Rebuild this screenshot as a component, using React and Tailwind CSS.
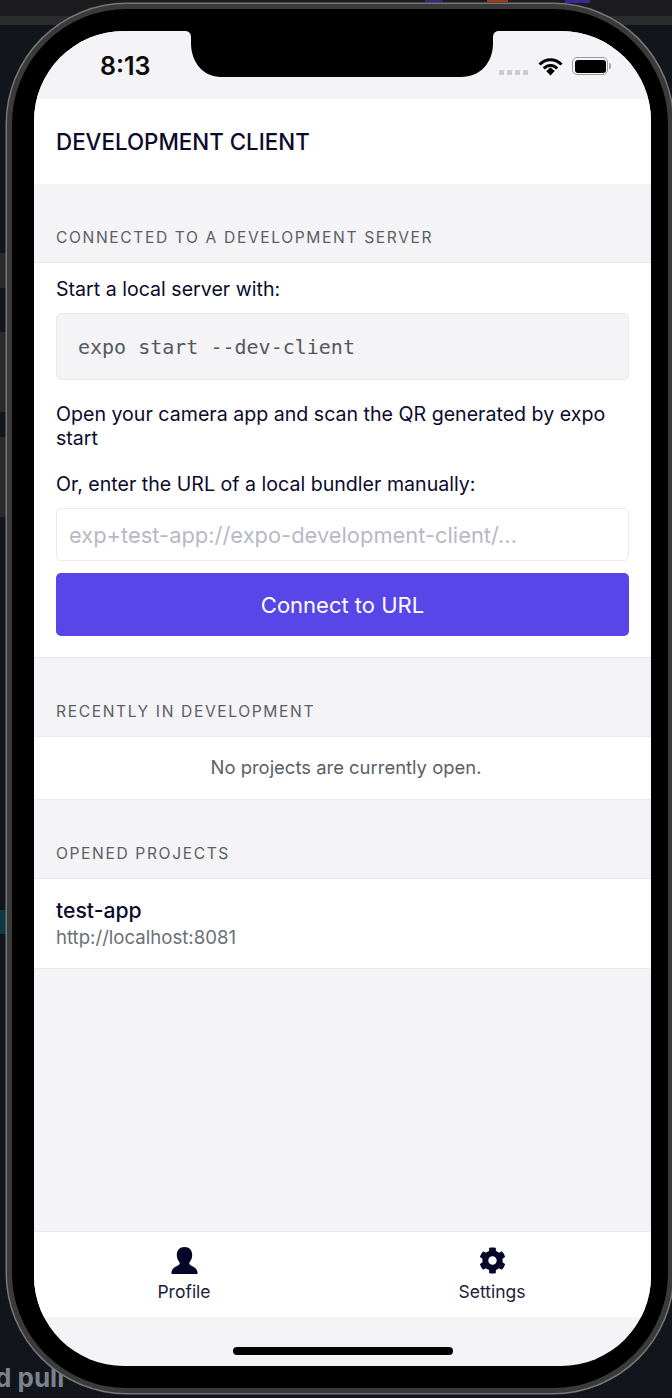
import { FaCog } from 'react-icons/fa';

// slices of the desktop that show to the left of the simulator: [top, height, colour]
const leftBands = [
  [253, 35, 'bg-[#2a2a2b]'],
  [332, 80, 'bg-[#2a2a2b]'],
  [437, 80, 'bg-[#2a2a2b]'],
  [910, 24, 'bg-[#0c3a42]'],
];

function SectionLabel({ children, className }) {
  return (
    <div className={`flex items-end px-[22px] pb-[15px] text-[15.6px] leading-[18px] tracking-[1.62px] text-[#5a5f66] ${className}`}>
      {children}
    </div>
  );
}

function StatusBar() {
  return (
    <div className="relative flex h-[68px] shrink-0 bg-[#f4f4f6]">
      <span className="ml-[66px] mt-[18px] text-[25px] font-semibold leading-[34px] text-[#0a0a0c]">8:13</span>
      <div className="ml-auto mr-[40px] mt-[26px] flex h-[20px] items-start">
        <div className="mt-[13px] flex gap-[3px]">
          <span className="h-[5px] w-[5px] rounded-[1px] bg-[#cdcdd0]" />
          <span className="h-[5px] w-[5px] rounded-[1px] bg-[#cdcdd0]" />
          <span className="h-[5px] w-[5px] rounded-[1px] bg-[#cdcdd0]" />
          <span className="h-[5px] w-[5px] rounded-[1px] bg-[#cdcdd0]" />
        </div>
        <svg className="ml-[10px]" width="25" height="19" viewBox="0 0 25 19">
          <path d="M1.5 7.5C8 1 17 1 23.5 7.5" fill="none" stroke="#000" strokeWidth="3" />
          <path d="M5.8 11.5C9.8 7.6 15.2 7.6 19.2 11.5" fill="none" stroke="#000" strokeWidth="3" />
          <path d="M8.2 14L12.5 10.6L16.8 14L12.5 18.6Z" fill="#000" />
        </svg>
        <div className="ml-[9px] flex items-center">
          <div className="h-[18px] w-[36px] rounded-[5px] border border-[#9a9a9c] p-[1.5px]">
            <div className="h-full w-full rounded-[3px] bg-black" />
          </div>
          <span className="ml-px h-[6px] w-[2px] rounded-r-[2px] bg-[#a5a5a7]" />
        </div>
      </div>
    </div>
  );
}

function TabBar() {
  return (
    <div className="flex h-[86px] shrink-0 border-t border-[#e9eaec] bg-white text-[17.5px] leading-[22px] text-[#1c1c3a]">
      <div className="flex w-[300px] flex-col items-center pt-[15px]">
        <svg width="27" height="27" viewBox="0 0 27 27" className="text-[#05052a]">
          <path
            fill="currentColor"
            d="M13.5 0C8.5 0 5.8 3.5 5.8 8C5.8 11 6.8 13.3 8.3 15C8.9 15.8 8.8 17 8 17.8C6.5 19.2 2.5 20 1 23.5C.6 24.6 .4 25.2 .4 26C.4 26.6 .8 27 1.2 27H25.8C26.2 27 26.6 26.6 26.6 26C26.6 25.2 26.4 24.6 26 23.5C24.5 20 20.5 19.2 19 17.8C18.2 17 18.1 15.8 18.7 15C20.2 13.3 21.2 11 21.2 8C21.2 3.5 18.5 0 13.5 0Z"
          />
        </svg>
        <span className="mt-[7px]">Profile</span>
      </div>
      <div className="flex w-[316px] flex-col items-center pt-[15px]">
        <FaCog size={27} className="text-[#05052a]" />
        <span className="mt-[7px]">Settings</span>
      </div>
    </div>
  );
}

export default function App() {
  return (
    <div className="relative h-[1398px] w-[672px] overflow-hidden bg-[#12161c] pl-[7px] pt-[4px] font-['Inter',sans-serif]">
      {/* stuff from the desktop behind the simulator */}
      <div className="absolute left-0 top-0 h-[16px] w-[672px] bg-[#1c1c1e]" />
      <div className="absolute left-0 top-[16px] h-[9px] w-[672px] bg-[#2c2c2e]" />
      <div className="absolute left-[425px] top-0 h-[2px] w-[18px] bg-[#2b2b80]" />
      <div className="absolute left-[487px] top-0 h-[2px] w-[21px] bg-[#a03a18]" />
      <div className="absolute left-[565px] top-0 h-[3px] w-[25px] bg-[#3a2a90]" />
      {leftBands.map(([top, height, colour]) => (
        <div key={top} className={`absolute left-0 w-[6px] ${colour}`} style={{ top, height }} />
      ))}
      <span className="absolute left-[-5px] top-[1360px] text-[26px] font-bold leading-[36px] text-[#7d838c]">d pull</span>

      <div className="relative h-[1389px] w-[666px] rounded-[120px] border-[5px] border-[#3a3a3b] bg-black pb-[22px] pl-[22px] pr-[17px] pt-[22px] shadow-[0_0_0_1.5px_#77777a]">
        <div className="flex h-[1335px] w-[617px] flex-col overflow-hidden rounded-[90px] bg-[#f4f4f6] text-[#0b0b2e]">
          <StatusBar />

          <div className="flex h-[85px] shrink-0 items-center bg-white px-[22px] pt-[1px] text-[22.35px] font-medium">
            DEVELOPMENT CLIENT
          </div>

          <SectionLabel className="h-[78px] shrink-0">CONNECTED TO A DEVELOPMENT SERVER</SectionLabel>

          <div className="h-[396px] shrink-0 border-y border-[#e9eaec] bg-white px-[22px] pt-[14px] text-[19.6px] leading-[24px]">
            <p className="leading-[25px]">Start a local server with:</p>
            <div className="mt-[11px] flex h-[67px] items-center rounded-[5px] border border-[#e9eaec] bg-[#f4f4f6] pl-[21px] font-['DejaVu_Sans_Mono',monospace] text-[20px] text-[#55585e]">
              expo start --dev-client
            </div>
            <p className="mt-[22px]">Open your camera app and scan the QR generated by expo start</p>
            <p className="mt-[22px] leading-[25px]">Or, enter the URL of a local bundler manually:</p>
            <input
              readOnly
              placeholder="exp+test-app://expo-development-client/..."
              className="mt-[11px] block h-[53px] w-full rounded-[5px] border border-[#e9eaec] bg-white px-[12px] text-[21.9px] outline-none placeholder:text-[#b9b9c4]"
            />
            <div className="mt-[12px] flex h-[63px] items-center justify-center rounded-[5px] bg-[#5846e8] text-[22px] text-white">
              Connect to URL
            </div>
          </div>

          <SectionLabel className="h-[78px] shrink-0">RECENTLY IN DEVELOPMENT</SectionLabel>

          <div className="flex h-[64px] shrink-0 items-center justify-center border-y border-[#e9eaec] bg-white pl-[7px] text-[18.45px] text-[#5a5f66]">
            No projects are currently open.
          </div>

          <SectionLabel className="h-[78px] shrink-0">OPENED PROJECTS</SectionLabel>

          <div className="h-[91px] shrink-0 border-y border-[#e9eaec] bg-white px-[22px] pt-[19px]">
            <p className="text-[21.2px] font-medium leading-[25px]">test-app</p>
            <p className="mt-[2px] text-[18.6px] leading-[25px] text-[#6b6f75]">http://localhost:8081</p>
          </div>

          <div className="flex-1" />
          <TabBar />

          <div className="flex h-[49px] shrink-0 justify-center pt-[30px]">
            <div className="h-[8px] w-[220px] rounded-full bg-black" />
          </div>
        </div>

        {/* notch with the small ears on its top corners */}
        <svg className="absolute left-[173px] top-[22px]" width="314" height="46" viewBox="0 0 314 46">
          <path d="M0 0C4 0 6 2 6 7V12C6 32 19 46 36 46H276C295 46 308 32 308 12V7C308 2 310 0 314 0Z" fill="#000" />
        </svg>
      </div>
    </div>
  );
}
